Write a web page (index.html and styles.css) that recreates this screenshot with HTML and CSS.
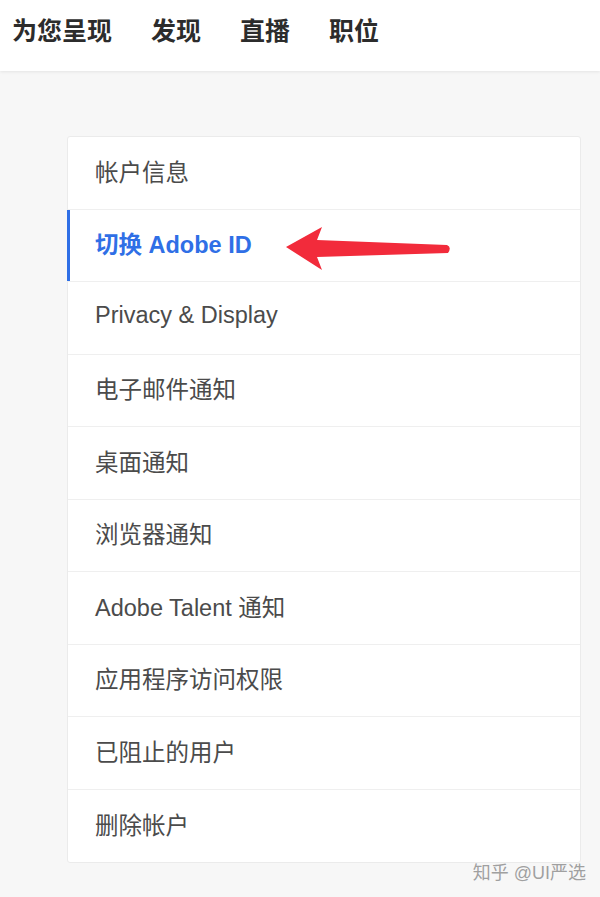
FILE: index.html
```html
<!DOCTYPE html>
<html lang="zh-CN">
  <head>
    <meta charset="UTF-8" />
    <meta name="viewport" content="width=device-width, initial-scale=1.0" />
    <title>设置</title>
    <link rel="stylesheet" href="styles.css">
  </head>
  <body>
    <header class="top-nav">
      <a class="nav-item">为您呈现</a>
      <a class="nav-item">发现</a>
      <a class="nav-item">直播</a>
      <a class="nav-item">职位</a>
    </header>

    <main class="content">
      <ul class="menu">
        <li class="menu-item">帐户信息</li>
        <li class="menu-item active">
          切换 Adobe ID
          <!-- 标注箭头 -->
          <svg class="arrow" width="170" height="50" viewBox="0 0 170 50">
            <path
              d="M2 22 L38 2 L33 15 L163 20 Q168 22 164 28 L33 32 L38 45 Z"
              fill="#f22b3b"
            />
          </svg>
        </li>
        <li class="menu-item">Privacy &amp; Display</li>
        <li class="menu-item">电子邮件通知</li>
        <li class="menu-item">桌面通知</li>
        <li class="menu-item">浏览器通知</li>
        <li class="menu-item">Adobe Talent 通知</li>
        <li class="menu-item">应用程序访问权限</li>
        <li class="menu-item">已阻止的用户</li>
        <li class="menu-item">删除帐户</li>
      </ul>
    </main>

    <div class="watermark">知乎 @UI严选</div>
  </body>
</html>
```

FILE: styles.css
```css
body {
  font-family: "Liberation Sans", "Noto Sans CJK SC", sans-serif;
  margin: 0;
  padding: 0;
  height: 897px;
  background-color: #f7f7f7;
  color: #4b4b4b;
  position: relative;
  overflow: hidden;
}

.top-nav {
  display: flex;
  align-items: center;
  gap: 39px;
  height: 57px;
  padding: 0 12px 14px;
  background: #ffffff;
  box-shadow: 0 1px 3px rgba(0, 0, 0, 0.08);
}

.nav-item {
  font-size: 25px;
  font-weight: bold;
  color: #2c2c2c;
  cursor: pointer;
}

.content {
  padding: 65px 19px 0 67px;
}

.menu {
  list-style: none;
  margin: 0;
  padding: 0;
  background: #ffffff;
  border: 1px solid #ebebeb;
  border-radius: 3px;
}

.menu-item {
  position: relative;
  display: flex;
  align-items: center;
  box-sizing: border-box;
  height: 72.5px;
  padding: 0 0 4px 27px;
  font-size: 23.5px;
  border-bottom: 1px solid #efefef;
}

.menu-item:last-child {
  border-bottom: none;
}

/* 当前选中项 */
.menu-item.active {
  color: #2f6fe6;
  font-weight: bold;
  box-shadow: inset 3px 0 0 #2f6fe6;
  margin-left: -1px;
  padding-left: 28px;
}

.arrow {
  position: absolute;
  left: 217px;
  top: 15px;
}

.watermark {
  position: absolute;
  right: 14px;
  top: 858px;
  font-size: 18px;
  color: #a0a0a0;
  text-shadow: 0 0 1px #ffffff;
}
```
